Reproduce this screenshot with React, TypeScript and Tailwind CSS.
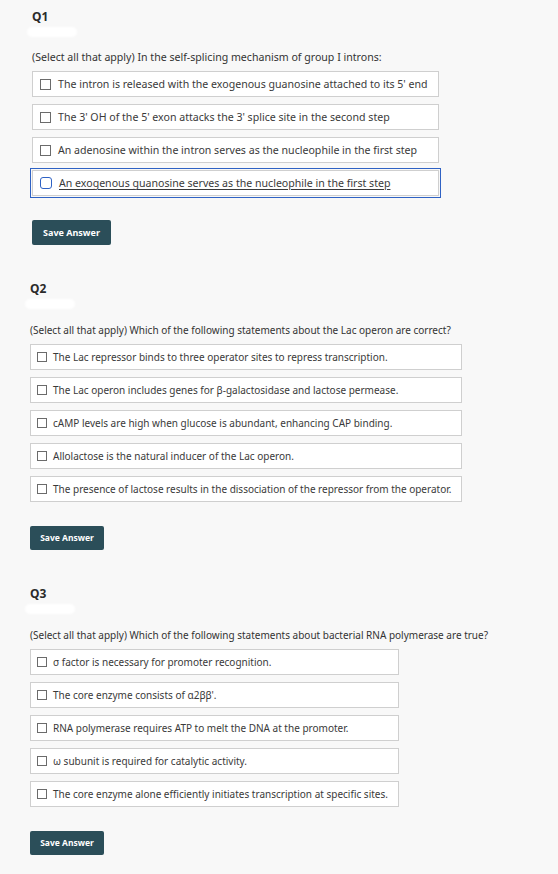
import React from 'react';

interface IQuestion {
  id: string;
  prompt: string;
  options: string[];
  focused?: number;
  large?: boolean;
}

const questions: IQuestion[] = [
  {
    id: 'Q1',
    prompt:
      '(Select all that apply) In the self-splicing mechanism of group I introns:',
    options: [
      "The intron is released with the exogenous guanosine attached to its 5' end",
      "The 3' OH of the 5' exon attacks the 3' splice site in the second step",
      'An adenosine within the intron serves as the nucleophile in the first step',
      'An exogenous guanosine serves as the nucleophile in the first step',
    ],
    focused: 3,
    large: true,
  },
  {
    id: 'Q2',
    prompt:
      '(Select all that apply) Which of the following statements about the Lac operon are correct?',
    options: [
      'The Lac repressor binds to three operator sites to repress transcription.',
      'The Lac operon includes genes for β-galactosidase and lactose permease.',
      'cAMP levels are high when glucose is abundant, enhancing CAP binding.',
      'Allolactose is the natural inducer of the Lac operon.',
      'The presence of lactose results in the dissociation of the repressor from the operator.',
    ],
  },
  {
    id: 'Q3',
    prompt:
      '(Select all that apply) Which of the following statements about bacterial RNA polymerase are true?',
    options: [
      'σ factor is necessary for promoter recognition.',
      "The core enzyme consists of α2ββ'.",
      'RNA polymerase requires ATP to melt the DNA at the promoter.',
      'ω subunit is required for catalytic activity.',
      'The core enzyme alone efficiently initiates transcription at specific sites.',
    ],
  },
];

const Question: React.FC<{ q: IQuestion; first: boolean }> = ({ q, first }) => {
  const big = q.large;
  return (
    <section className={first ? 'pt-[9px] pl-[32px]' : 'mt-[36px]'}>
      <h2 className="text-[12px] leading-[16px] font-bold text-[#2b2b2b]">
        {q.id}
      </h2>
      <div className="mt-[2px] -ml-[5px] h-[10px] w-[50px] rounded-full bg-white blur-[1px]" />
      <p
        className={
          big
            ? 'mt-[13px] text-[10.6px] leading-[14px] text-[#333]'
            : 'mt-[14px] text-[10px] leading-[14px] text-[#333]'
        }
      >
        {q.prompt}
      </p>
      <div className="mt-[7px] flex w-fit flex-col gap-[7px]">
        {q.options.map((opt, i) => {
          const isFocused = q.focused === i;
          return (
            <label
              key={i}
              className={
                'flex h-[26px] items-center border border-[#cfcfcf] bg-white pr-[10px] ' +
                (big ? 'pl-[7px] gap-[7px] ' : 'pl-[6px] gap-[6px] ') +
                (isFocused ? 'outline outline-1 outline-offset-1 outline-[#2f62c4]' : '')
              }
            >
              <span
                className={
                  isFocused
                    ? 'h-[12px] w-[12px] shrink-0 rounded-[3px] border-[1.5px] border-[#2f62c4] bg-white'
                    : big
                      ? 'h-[11px] w-[11px] shrink-0 border border-[#6b6b6b] bg-white'
                      : 'h-[10px] w-[10px] shrink-0 border border-[#6b6b6b] bg-white'
                }
              />
              <span
                className={
                  (big ? 'text-[10.6px] ' : 'text-[10px] ') +
                  'whitespace-nowrap leading-[14px] text-[#3a3a3a] ' +
                  (isFocused ? 'underline underline-offset-2' : '')
                }
              >
                {opt}
              </span>
            </label>
          );
        })}
      </div>
      <button
        className={
          'mt-[24px] flex items-center justify-center rounded-[2px] bg-[#2b4e59] font-bold text-white ' +
          (big ? 'h-[25px] w-[79px] text-[9px]' : 'h-[24px] w-[74px] text-[8.5px]')
        }
      >
        Save Answer
      </button>
    </section>
  );
};

export default function App() {
  return (
    <div
      className="min-h-screen bg-[#f8f8f8] pb-[20px]"
      style={{ fontFamily: '"Noto Sans", "Open Sans", sans-serif' }}
    >
      <div className="pl-[30px]">
        {questions.map((q, i) => (
          <div key={q.id} className={i === 0 ? '-ml-[30px]' : ''}>
            <Question q={q} first={i === 0} />
          </div>
        ))}
      </div>
    </div>
  );
}
